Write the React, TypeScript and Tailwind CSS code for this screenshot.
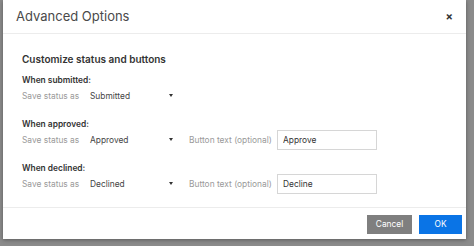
import { useState } from "react";

const Caret = () => (
  <svg width="4" height="3" viewBox="0 0 4 3" className="shrink-0">
    <path d="M0 0h4L2 3z" fill="#333" />
  </svg>
);

function StatusRow({ value, button }: { value: string; button?: string }) {
  const [text, setText] = useState(button ?? "");
  return (
    <div className="mt-[1px] flex items-center h-[20px] text-[8.4px] whitespace-nowrap">
      <span className="w-[68px] shrink-0 text-[#9a9a9a]">Save status as</span>
      <div className="w-[83px] shrink-0 flex items-center justify-between text-[#444]">
        <span>{value}</span>
        <Caret />
      </div>
      {button !== undefined && (
        <>
          <span className="ml-[16px] w-[88px] shrink-0 text-[#9a9a9a]">Button text (optional)</span>
          <input
            value={text}
            onChange={(e) => setText(e.target.value)}
            className="w-[100px] h-[20px] shrink-0 border border-[#d6d6d6] px-[5px] text-[8.4px] text-[#333] outline-none"
          />
        </>
      )}
    </div>
  );
}

export default function App() {
  return (
    <div
      className="w-[474px] h-[246px] bg-[#8b8b8b] pl-[3px] pr-[8px] pb-[7px] overflow-hidden"
      style={{ fontFamily: "Inter, 'Noto Sans', sans-serif" }}
    >
      {/* DIALOG */}
      <div className="w-[463px] h-[239px] bg-white flex flex-col shadow-[0_1px_4px_rgba(0,0,0,0.35)]">
        {/* HEADER */}
        <div className="h-[34px] shrink-0 flex items-center justify-between pl-[13px] pr-[13px] border-b border-[#ececec]">
          <span className="text-[13px] text-[#4a4a4a]">Advanced Options</span>
          <span className="text-[11px] font-bold text-[#333] leading-none">×</span>
        </div>

        {/* BODY */}
        <div className="flex-1 px-[19px] pt-[17px] border-b border-[#ececec]">
          <div className="text-[10px] font-semibold text-[#333] leading-[16px]">Customize status and buttons</div>

          <div className="mt-[8px] text-[8.4px] font-semibold text-[#333] leading-[10px]">When submitted:</div>
          <StatusRow value="Submitted" />

          <div className="mt-[13px] text-[8.4px] font-semibold text-[#333] leading-[10px]">When approved:</div>
          <StatusRow value="Approved" button="Approve" />

          <div className="mt-[13px] text-[8.4px] font-semibold text-[#333] leading-[10px]">When declined:</div>
          <StatusRow value="Declined" button="Decline" />
        </div>

        {/* FOOTER */}
        <div className="h-[31px] shrink-0 flex items-center justify-end gap-[7px] pr-[4px] pt-[2px]">
          <button className="w-[45px] h-[19px] bg-[#7f7f7f] text-white text-[8.4px]">Cancel</button>
          <button className="w-[43px] h-[19px] bg-[#0a74e6] text-white text-[8.4px]">OK</button>
        </div>
      </div>
    </div>
  );
}
